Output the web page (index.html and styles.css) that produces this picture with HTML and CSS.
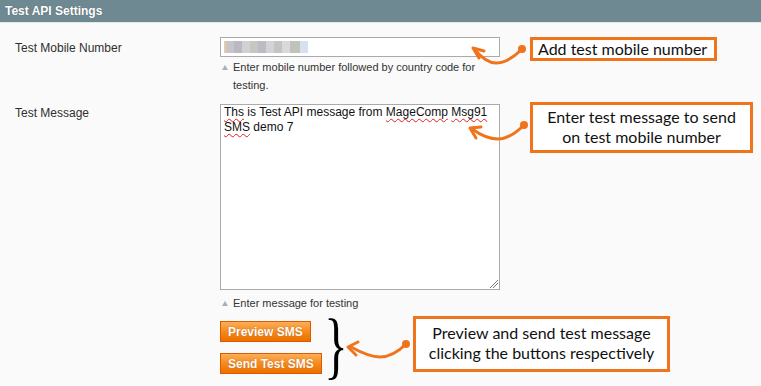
FILE: index.html
```html
<!DOCTYPE html>
<html lang="en">

<head>
    <meta charset="UTF-8">
    <meta name="viewport" content="width=device-width, initial-scale=1.0">
    <title>Test API Settings</title>
    <link rel="stylesheet" href="styles.css">
</head>

<body>

    <div class="section-head">Test API Settings</div>

    <div class="form-box">
        <div class="form-row">
            <label class="field-label">Test Mobile Number</label>
            <div class="field-value">
                <div class="input-text"><span class="blurred"></span></div>
                <p class="note">Enter mobile number followed by country code for testing.</p>
            </div>
        </div>

        <div class="form-row">
            <label class="field-label label-top">Test Message</label>
            <div class="field-value">
                <div class="textarea">
                    <span class="typo">Ths</span> is Test API message from <span class="typo">MageComp</span> <span class="typo">Msg91</span>
                    <span class="typo">SMS</span> demo 7
                    <span class="grip"></span>
                </div>
                <p class="note">Enter message for testing</p>
                <div class="buttons">
                    <button class="btn">Preview SMS</button>
                    <button class="btn">Send Test SMS</button>
                </div>
            </div>
        </div>
    </div>

    <!-- annotations drawn on top of the screenshot -->
    <div class="callout callout-mobile">Add test mobile number</div>
    <div class="callout callout-message">Enter test message to send<br>on test mobile number</div>
    <div class="callout callout-buttons">Preview and send test message<br>clicking the buttons respectively</div>
    <span class="brace">}</span>

    <svg class="arrows" width="761" height="386" viewBox="0 0 761 386">
        <g fill="none" stroke="#f0741c" stroke-width="3" stroke-linecap="round" stroke-linejoin="round">
            <path d="M522,49 C514,57 506,63 496,63 C488,63 481,57 475,50" />
            <path d="M484,51 L473,48 L479,58" />

            <path d="M524,125 C516,133 508,139 498,139 C488,139 479,134 472,129" />
            <path d="M481,127 L470,128 L476,138" />

            <path d="M406,344 C398,352 390,357 380,357 C370,357 360,352 351,347" />
            <path d="M358,342 L348,347 L356,355" />
        </g>
        <g fill="#f0741c">
            <circle cx="522" cy="49" r="4" />
            <circle cx="524" cy="125" r="4" />
            <circle cx="406" cy="344" r="4" />
        </g>
    </svg>

</body>

</html>
```

FILE: styles.css
```css
body {
    margin: 0;
    background-color: #fafafa;
    font-family: "Liberation Sans", Arial, sans-serif;
    font-size: 12px;
    color: #2f2f2f;
    width: 761px;
    height: 386px;
    overflow: hidden;
    position: relative;
}

.section-head {
    height: 22px;
    line-height: 22px;
    padding-left: 5px;
    background-color: #6f8992;
    border-bottom: 1px solid #e4e7e8;
    color: #fff;
    font-weight: bold;
    font-size: 12px;
    text-shadow: 0 0 1px #4a5c62;
}

.form-box {
    padding: 14px 0 0 15px;
}

.form-row {
    display: grid;
    grid-template-columns: 205px 280px;
    margin-bottom: 10px;
}

.field-label {
    padding-top: 4px;
    line-height: 15px;
}

.label-top {
    padding-top: 2px;
}

.input-text {
    box-sizing: border-box;
    height: 20px;
    border: 1px solid #aaa;
    background-color: #fff;
    padding: 3px 0 0 3px;
}

.blurred {
    display: block;
    width: 84px;
    height: 12px;
    background: linear-gradient(90deg, #e8c9a8 0 2px, #c5c5ca 2px 10px, #b9b9bf 10px 18px, #d1d1d4 18px 26px, #c9c5c3 26px 34px, #bcbcc4 34px 42px, #d3d3d6 42px 50px, #c3c3c8 50px 58px, #d9d9d7 58px 66px, #c1c1bd 66px 76px, #d7e1ee 76px 80px);
    filter: blur(0.6px);
}

.note {
    margin: 1px 0 0;
    padding-left: 13px;
    position: relative;
    font-size: 11px;
    line-height: 18px;
    color: #333;
}

.note::before {
    content: "";
    position: absolute;
    left: 2px;
    top: 7px;
    border-left: 3.5px solid transparent;
    border-right: 3.5px solid transparent;
    border-bottom: 5px solid #a7b0b4;
}

.textarea {
    box-sizing: border-box;
    position: relative;
    height: 186px;
    border: 1px solid #aaa;
    background-color: #fff;
    padding: 0 3px;
    line-height: 15px;
    color: #111;
}

.typo {
    text-decoration: underline wavy #e02020;
    text-decoration-thickness: 1px;
    text-underline-offset: 2px;
}

.grip {
    position: absolute;
    right: 1px;
    bottom: 1px;
    width: 8px;
    height: 8px;
    background: linear-gradient(135deg, transparent 0 45%, #777 45% 52%, transparent 52% 68%, #777 68% 75%, transparent 75%);
}

.textarea + .note {
    margin-top: 4px;
}

.buttons {
    display: flex;
    flex-direction: column;
    align-items: flex-start;
    gap: 11px;
    margin-top: 9px;
}

.btn {
    box-sizing: border-box;
    height: 21px;
    padding: 0 7px;
    border: 1px solid #dc5b00;
    background: linear-gradient(#fbae5a, #f58a1c 50%, #ec6f00);
    color: #fff;
    font-family: "Liberation Sans", Arial, sans-serif;
    font-size: 12px;
    font-weight: bold;
    text-shadow: 0 0 1px #b4540a;
    cursor: pointer;
}

.callout {
    position: absolute;
    box-sizing: border-box;
    border: 3px solid #f0741c;
    background-color: #fff;
    font-family: Lato, "Open Sans", sans-serif;
    font-size: 16px;
    line-height: 20px;
    color: #111;
    text-align: center;
}

.callout-mobile {
    left: 530px;
    top: 37px;
    width: 187px;
    height: 24px;
    line-height: 18px;
    text-align: left;
    padding-left: 5px;
}

.callout-message {
    left: 530px;
    top: 102px;
    width: 223px;
    height: 51px;
    padding-top: 2px;
}

.callout-buttons {
    left: 413px;
    top: 316px;
    width: 257px;
    height: 56px;
    padding-top: 4px;
}

.brace {
    position: absolute;
    left: 318px;
    top: 315px;
    font-family: "Liberation Serif", serif;
    font-size: 75px;
    line-height: 60px;
    color: #000;
    transform: scaleX(0.65);
}

.arrows {
    position: absolute;
    left: 0;
    top: 0;
    pointer-events: none;
}
```
